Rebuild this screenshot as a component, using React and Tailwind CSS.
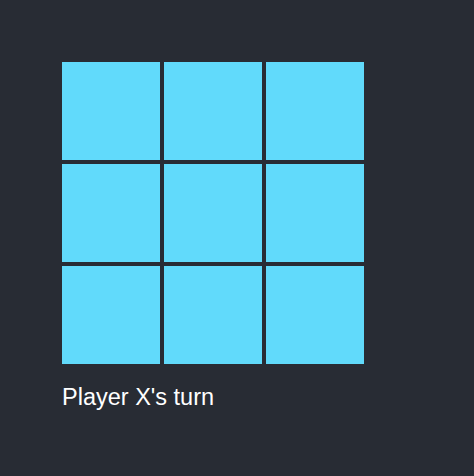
export default function App() {
  const cells = Array.from({ length: 9 }, (_, i) => i);
  return (
    <div className="w-[474px] h-[476px] bg-[#282c34] p-[62px] font-['Liberation_Sans',Arial,sans-serif]">
      <div className="grid grid-cols-[repeat(3,98px)] grid-rows-[repeat(3,98px)] gap-1 w-max">
        {cells.map((i) => (
          <button key={i} className="bg-[#61dafb]" aria-label={`Cell ${i + 1}`} />
        ))}
      </div>
      <p className="mt-5 text-[23.5px] leading-[26px] text-white">Player X's turn</p>
    </div>
  );
}
